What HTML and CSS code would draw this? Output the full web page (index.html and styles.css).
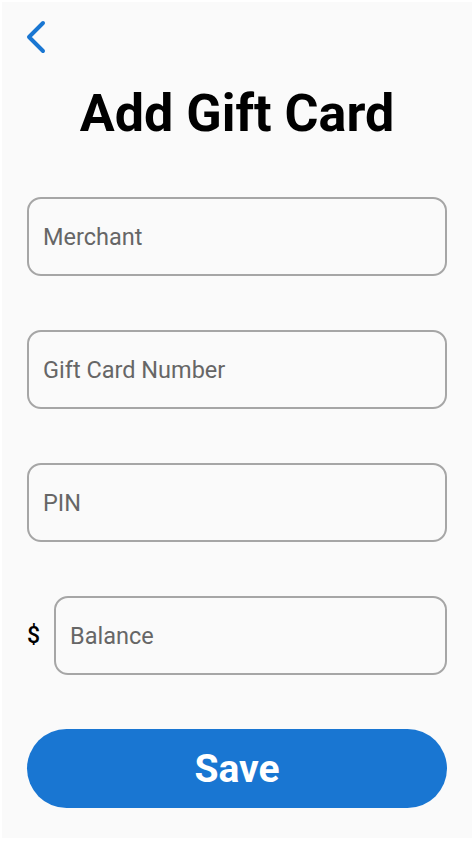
FILE: index.html
```html
<!DOCTYPE html>
<html lang="en">

<head>
    <meta charset="UTF-8">
    <title>Add Gift Card</title>
    <link rel="stylesheet" href="styles.css">
</head>

<body>
    <div class="screen">
        <div class="topbar">
            <a class="back" href="#">
                <svg width="22" height="34" viewBox="0 0 22 34">
                    <polyline points="17,3 3,17 17,31" fill="none" stroke="#1976d2" stroke-width="4" stroke-linecap="round" stroke-linejoin="round"/>
                </svg>
            </a>
        </div>
        <h1 class="title">Add Gift Card</h1>
        <form class="form">
            <div class="row">
                <input class="field" type="text" placeholder="Merchant">
            </div>
            <div class="row">
                <input class="field" type="text" placeholder="Gift Card Number">
            </div>
            <div class="row">
                <input class="field" type="text" placeholder="PIN">
            </div>
            <div class="row">
                <span class="currency">$</span>
                <input class="field" type="text" placeholder="Balance">
            </div>
            <button class="save" type="button">Save</button>
        </form>
    </div>
</body>

</html>
```

FILE: styles.css
```css
body {
    margin: 0;
    background: #fff;
    font-family: Roboto, "Liberation Sans", sans-serif;
}

.screen {
    margin: 2px;
    height: 836px;
    background: #fafafa;
    padding: 0 25px;
    box-sizing: border-box;
}

.topbar {
    height: 70px;
    padding-top: 18px;
    box-sizing: border-box;
}

.back {
    display: inline-block;
    line-height: 0;
    margin-left: -1px;
}

.title {
    margin: 0;
    text-align: center;
    font-size: 52px;
    font-weight: 700;
    color: #000;
    line-height: 84px;
    margin-top: 0;
    margin-bottom: 41px;
}

.form {
    display: flex;
    flex-direction: column;
    gap: 54px;
}

.row {
    display: flex;
    align-items: center;
    gap: 15px;
}

.field {
    flex: 1;
    height: 79px;
    box-sizing: border-box;
    border: 2px solid #a6a6a6;
    border-radius: 14px;
    background: #fafafa;
    padding: 0 14px;
    font-family: Roboto, "Liberation Sans", sans-serif;
    font-size: 23.5px;
    color: #333;
    outline: none;
}

.field::placeholder {
    color: #666;
}

.currency {
    font-size: 23px;
    font-weight: 500;
    color: #000;
    width: 12px;
}

.save {
    height: 79px;
    border: none;
    border-radius: 40px;
    background: #1976d2;
    color: #fff;
    font-family: Roboto, "Liberation Sans", sans-serif;
    font-size: 39px;
    font-weight: 700;
}
```
